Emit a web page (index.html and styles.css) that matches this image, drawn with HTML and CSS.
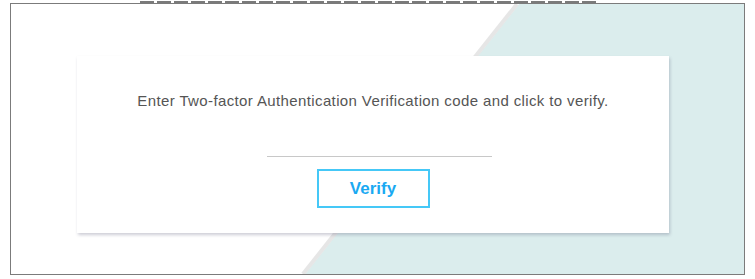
FILE: index.html
```
<!DOCTYPE html>
<html>
<head>
<meta charset="utf-8">
<link rel="stylesheet" href="styles.css">
</head>
<body>
<div class="dashes"></div>
<div class="frame">
  <svg class="bg" width="733" height="270" viewBox="0 0 733 270" aria-hidden="true">
    <polygon points="508,0 733,0 733,270 294,270" fill="#dbeded"/>
    <line x1="506" y1="0" x2="292" y2="270" stroke="#e6e6e6" stroke-width="4"/>
  </svg>
  <div class="card">
    <p class="msg">Enter Two-factor Authentication Verification code and click to verify.</p>
    <input class="code" type="text">
    <button class="verify">Verify</button>
  </div>
</div>
</body>
</html>
```
FILE: styles.css
```
html, body {
  margin: 0;
  padding: 0;
  background: #ffffff;
  font-family: "Liberation Sans", Arial, sans-serif;
}
body {
  width: 755px;
  height: 279px;
  overflow: hidden;
  position: relative;
}
.dashes {
  position: absolute;
  left: 140px;
  top: 1px;
  width: 459px;
  height: 2px;
  background: repeating-linear-gradient(90deg, #7a7a7a 0 14px, transparent 14px 17px);
  z-index: 2;
}
.frame {
  position: relative;
  margin: 3px 0 0 10px;
  border: 1px solid #7b7b7b;
  display: flex;
  flex-direction: column;
  align-items: flex-start;
  padding: 52px 0 0 66px;
  box-sizing: content-box;
  width: 667px;
  height: 218px;
}
.bg {
  position: absolute;
  left: 0;
  top: 0;
}
.card {
  position: relative;
  width: 592px;
  height: 177px;
  box-sizing: border-box;
  background: #fff;
  box-shadow: 1px 2px 3px rgba(80, 80, 110, 0.28);
  display: flex;
  flex-direction: column;
  align-items: center;
  padding-top: 37px;
}
.msg {
  margin: 0;
  font-size: 15px;
  letter-spacing: 0.38px;
  line-height: 16px;
  color: #555555;
}
.code {
  margin: 17px 0 0 13px;
  width: 225px;
  height: 31px;
  box-sizing: border-box;
  border: none;
  border-bottom: 1px solid #c8c8c8;
  outline: none;
  background: transparent;
  padding: 0;
}
.verify {
  margin-top: 12px;
  width: 113px;
  height: 39px;
  box-sizing: border-box;
  border: 2px solid #45c8f7;
  background: #fff;
  color: #1aa9f2;
  font-family: "Liberation Sans", Arial, sans-serif;
  font-weight: bold;
  font-size: 17px;
  padding: 0;
}
```
